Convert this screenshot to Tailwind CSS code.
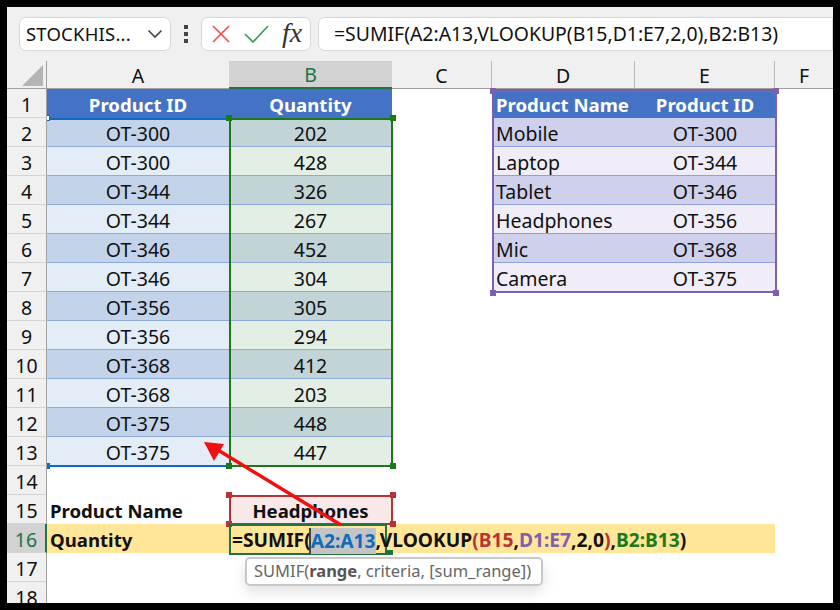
<!DOCTYPE html>
<html lang="en">
<head>
    <meta charset="UTF-8">
    <title>SUMIF VLOOKUP</title>
    <script src="https://cdn.jsdelivr.net/npm/@tailwindcss/browser@4"></script>
</head>
<body class="bg-black">
    <div class="w-[840px] h-[610px] p-[7px] font-['Noto_Sans','Open_Sans',sans-serif] text-[#111]">
        <div class="relative w-[826px] h-[596px] bg-white overflow-hidden">

            <!-- Formula bar -->
            <div class="h-[54px] bg-[#f0f0f0] flex items-start pt-[10px] pl-[12px] gap-[7px]">
                <div class="w-[152px] h-[34px] bg-white border border-[#d8d8d8] rounded-[7px] flex items-center justify-between pl-[6px] pr-[7px] text-[18.500px] tracking-[0.2px]">
                    <span>STOCKHIS...</span>
                    <svg width="16" height="10" viewBox="0 0 16 10" fill="none" stroke="#444" stroke-width="1.6"><path d="M1.500 1.500 8 8l6.500-6.500"/></svg>
                </div>
                <div class="w-[16px] h-[34px] flex flex-col items-center justify-center gap-[3px]">
                    <div class="w-[4px] h-[4px] bg-[#444]"></div>
                    <div class="w-[4px] h-[4px] bg-[#444]"></div>
                    <div class="w-[4px] h-[4px] bg-[#444]"></div>
                </div>
                <div class="w-[110px] h-[34px] bg-white border border-[#d8d8d8] rounded-[7px] flex items-center pl-[9px] pr-[6px] gap-[13px]">
                    <svg width="20" height="20" viewBox="0 0 20 20" fill="none" stroke="#f05050" stroke-width="1.700"><path d="M2 2l16 16M18 2 2 18"/></svg>
                    <svg width="25" height="20" viewBox="0 0 25 20" fill="none" stroke="#3f9a5a" stroke-width="1.700"><path d="M1 10l8 8L24 2"/></svg>
                    <span class="font-['Liberation_Serif',serif] italic text-[28px] leading-none text-[#333] pb-[2px]">fx</span>
                </div>
                <div class="flex-1 h-[34px] bg-white border border-[#d8d8d8] rounded-l-[7px] flex items-center pl-[15px] text-[19.400px] whitespace-nowrap">=SUMIF(A2:A13,VLOOKUP(B15,D1:E7,2,0),B2:B13)</div>
            </div>

            <!-- Sheet, filled in below -->
            <div id="sheet" class="grid grid-cols-[40px_182px_163px_100px_143px_140px_58px] grid-rows-[28px_repeat(18,29px)] text-[19.500px]"></div>

            <!-- Selection ranges -->
            <div class="absolute left-[40px] top-[111px] w-[180px] h-[349px] border-y-[2.500px] border-[#0f6cbd]"></div>
            <div class="absolute left-[40px] top-[108px] w-[3px] h-[6px] bg-white border border-l-0 border-[#0f6cbd]"></div>
            <div class="absolute left-[40px] top-[456px] w-[3px] h-[6px] bg-[#0f6cbd]"></div>

            <div class="absolute left-[222px] top-[111px] w-[164px] h-[349px] border-[2.500px] border-[#1a7a1a]"></div>
            <div class="absolute left-[219px] top-[108px] w-[6px] h-[6px] bg-[#1a7a1a]"></div>
            <div class="absolute left-[383px] top-[108px] w-[6px] h-[6px] bg-[#1a7a1a]"></div>
            <div class="absolute left-[219px] top-[456px] w-[6px] h-[6px] bg-[#1a7a1a]"></div>
            <div class="absolute left-[383px] top-[456px] w-[6px] h-[6px] bg-[#1a7a1a]"></div>

            <div class="absolute left-[485px] top-[83px] w-[285px] h-[203px] border-[2.500px] border-[#7f5fb0]"></div>
            <div class="absolute left-[483px] top-[81px] w-[6px] h-[6px] bg-[#7f5fb0]"></div>
            <div class="absolute left-[766px] top-[81px] w-[6px] h-[6px] bg-[#7f5fb0]"></div>
            <div class="absolute left-[483px] top-[283px] w-[6px] h-[6px] bg-[#7f5fb0]"></div>
            <div class="absolute left-[766px] top-[283px] w-[6px] h-[6px] bg-[#7f5fb0]"></div>

            <div class="absolute left-[222px] top-[488px] w-[164px] h-[30px] border-[2.500px] border-[#b83236]"></div>
            <div class="absolute left-[219px] top-[485px] w-[6px] h-[6px] bg-[#b83236]"></div>
            <div class="absolute left-[383px] top-[485px] w-[6px] h-[6px] bg-[#b83236]"></div>
            <div class="absolute left-[219px] top-[514px] w-[6px] h-[6px] bg-[#b83236]"></div>
            <div class="absolute left-[383px] top-[514px] w-[6px] h-[6px] bg-[#b83236]"></div>

            <!-- Cell being edited -->
            <div class="absolute left-[222px] top-[517px] w-[158px] h-[31px] border-[2.500px] border-[#217346]"></div>
            <div class="absolute left-[380px] top-[543px] w-[6px] h-[5px] bg-[#217346]"></div>
            <div class="absolute left-[225px] top-[519px] h-[29px] flex items-center font-bold text-[19.200px] whitespace-nowrap">=SUMIF(<span class="bg-[#c4c4c4] text-[#0f6cbd] border-l-2 border-[#444] -ml-[2px] h-[26px] leading-[26px]">A2:A13</span>,VLOOKUP<span class="text-[#b83236]">(B15</span>,<span class="text-[#7f5fb0]">D1:E7</span>,2,0<span class="text-[#b83236]">)</span>,<span class="text-[#1a7a1a]">B2:B13</span>)</div>

            <!-- Argument tooltip -->
            <div class="absolute left-[238px] top-[550px] w-[298px] h-[29px] bg-white border-2 border-[#c8c8c8] rounded-[5px] shadow-[0_6px_14px_rgba(0,0,0,0.12)] flex items-center pl-[7px] pb-[1px] text-[16.500px] text-[#666] whitespace-nowrap">SUMIF(<b class="text-[#555]">range</b>, criteria, [sum_range])</div>

            <!-- Red arrow -->
            <svg class="absolute left-[190px] top-[425px]" width="160" height="100" viewBox="0 0 160 100" fill="none">
                <path d="M144 93 16 15" stroke="#f01010" stroke-width="3.500"/>
                <path d="M7 10 27 12 17 29z" fill="#f01010"/>
            </svg>
        </div>
    </div>

    <script>
        const columns = ['A', 'B', 'C', 'D', 'E', 'F'];
        const orders = ['OT-300', 'OT-300', 'OT-344', 'OT-344', 'OT-346', 'OT-346', 'OT-356', 'OT-356', 'OT-368', 'OT-368', 'OT-375', 'OT-375'];
        const quantities = [202, 428, 326, 267, 452, 304, 305, 294, 412, 203, 448, 447];
        const products = [['Mobile', 'OT-300'], ['Laptop', 'OT-344'], ['Tablet', 'OT-346'], ['Headphones', 'OT-356'], ['Mic', 'OT-368'], ['Camera', 'OT-375']];

        const center = 'flex items-center justify-center pt-[3px]';
        const left = 'flex items-center pl-[4px] pt-[3px]';
        const leftA = 'flex items-center pl-[3px] pt-[3px]';
        const bold = ' font-bold text-[18.600px]';

        function cell(row, col) {
            // header row of the two tables
            if (row === 1) {
                if (col === 'A') return [center + ' bg-[#4472c4] text-white' + bold, 'Product ID'];
                if (col === 'B') return [center + ' bg-[#4472c4] text-white' + bold, 'Quantity'];
                if (col === 'D') return [left + ' bg-[#4472c4] text-white' + bold, 'Product Name'];
                if (col === 'E') return [center + ' bg-[#4472c4] text-white' + bold, 'Product ID'];
            }
            if (row >= 2 && row <= 13) {
                const band = row % 2 === 0;
                if (col === 'A') return [center + ' border-b border-[#8ea9db] ' + (band ? 'bg-[#c3d3ea]' : 'bg-[#e3edf7]'), orders[row - 2]];
                if (col === 'B') return [center + ' border-b border-[#8ea9db] ' + (band ? 'bg-[#c3d4d6]' : 'bg-[#e3eee4]'), quantities[row - 2]];
            }
            if (row >= 2 && row <= 7) {
                const band = row % 2 === 0;
                const fill = band ? 'bg-[#cfd1ec]' : 'bg-[#f0edf8]';
                if (col === 'D') return [left + ' border-b border-[#8ea0dc] ' + fill, products[row - 2][0]];
                if (col === 'E') return [center + ' border-b border-[#8ea0dc] ' + fill, products[row - 2][1]];
            }
            if (row === 15) {
                if (col === 'A') return [leftA + bold, 'Product Name'];
                if (col === 'B') return [center + ' bg-[#f8e8e8]' + bold, 'Headphones'];
            }
            if (row === 16) {
                if (col === 'A') return [leftA + ' bg-[#ffe699]' + bold, 'Quantity'];
                if (col === 'B' || col === 'C' || col === 'D' || col === 'E') return ['bg-[#ffe699]', ''];
            }
            return ['', ''];
        }

        let html = '<div class="bg-[#f0f0f0] border-r border-b border-[#a0a0a0] flex items-end justify-end p-[2px] pr-[3px]"><div class="w-[21px] h-[21px] bg-[#b4b4b4] [clip-path:polygon(100%_0,100%_100%,0_100%)]"></div></div>';
        columns.forEach(col => {
            const active = col === 'B';
            html += `<div class="flex items-center justify-center pt-[2px] border-b ${active ? 'bg-[#d2d2d2] border-b-2 border-[#217346] text-[#217346]' : 'bg-[#f0f0f0] border-[#a0a0a0]'} ${col === 'C' || col === 'D' || col === 'E' ? 'border-r border-r-[#b8b8b8]' : ''}">${col}</div>`;
        });
        for (let row = 1; row <= 18; row++) {
            const active = row === 16;
            html += `<div class="${center} border-b border-[#d4d4d4] ${active ? 'bg-[#d2d2d2] text-[#217346] border-r-2 border-r-[#217346]' : 'bg-[#f0f0f0] border-r border-r-[#a0a0a0]'}">${row}</div>`;
            columns.forEach(col => {
                const [classes, text] = cell(row, col);
                html += `<div class="${classes} whitespace-nowrap">${text}</div>`;
            });
        }
        document.getElementById('sheet').innerHTML = html;
    </script>
</body>
</html>
